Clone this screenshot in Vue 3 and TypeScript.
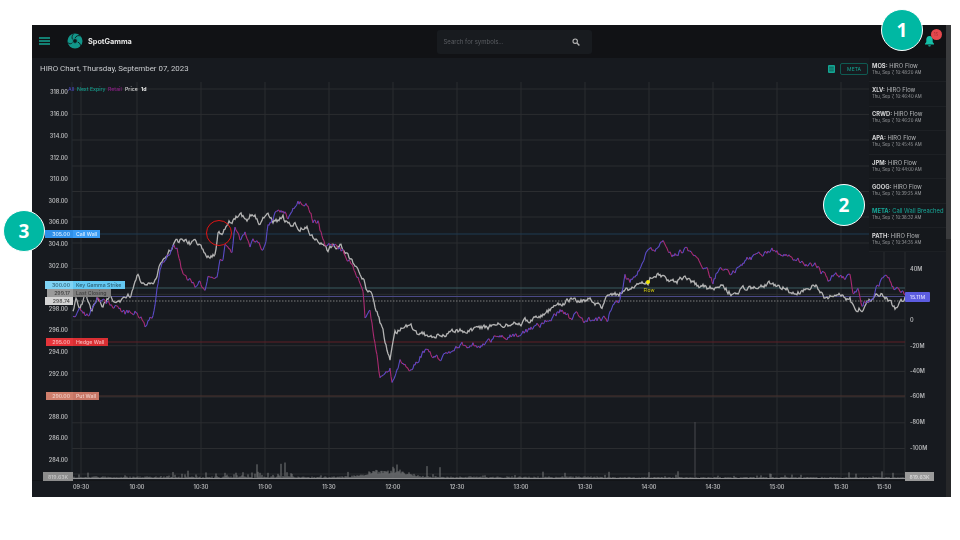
<script setup lang="ts">
type P = [number, number]

const priceKeys: P[] = [[73,310],[76,299],[80,311],[83,303],[86,294],[92,312],[97,298],[103,306],[110,297],[118,303],[125,300],[130,296],[137,273],[143,283],[147,287],[153,285],[158,272],[163,258],[172,248],[182,238],[190,243],[200,243],[207,257],[215,253],[218,233],[222,235],[228,223],[240,215],[247,222],[252,213],[260,223],[267,213],[273,222],[283,218],[288,225],[295,223],[300,228],[307,228],[315,238],[327,249],[340,245],[350,260],[360,273],[367,290],[372,295],[375,307],[382,327],[388,353],[390,360],[395,332],[400,330],[410,325],[420,335],[440,335],[460,330],[480,328],[500,325],[520,323],[540,318],[560,303],[573,300],[590,300],[602,306],[608,297],[627,291],[638,283],[648,282],[655,273],[660,273],[670,282],[687,279],[695,285],[710,288],[723,288],[733,295],[743,287],[760,288],[770,284],[797,293],[817,285],[827,300],[837,295],[850,300],[855,308],[862,308],[873,297],[883,295],[895,309],[905,297]]

const hiroKeys: P[] = [[73,318],[80,309],[88,317],[97,299],[113,305],[125,315],[137,310],[145,325],[153,317],[160,270],[170,250],[177,247],[183,277],[197,287],[200,283],[205,290],[208,278],[217,278],[220,257],[223,262],[225,245],[232,252],[235,227],[240,238],[245,233],[250,247],[253,237],[262,250],[265,247],[268,227],[277,210],[283,210],[288,218],[295,208],[298,202],[308,207],[313,220],[318,222],[325,247],[340,248],[350,260],[357,277],[363,287],[365,317],[370,307],[373,330],[380,377],[390,367],[392,380],[400,362],[410,370],[425,350],[440,360],[460,345],[480,345],[500,335],[520,335],[540,325],[562,310],[570,318],[578,313],[582,320],[607,320],[612,308],[620,300],[625,277],[630,282],[640,267],[648,250],[653,252],[662,241],[672,255],[685,250],[695,258],[707,270],[713,283],[720,265],[730,273],[738,268],[747,258],[760,257],[775,250],[795,260],[815,265],[828,280],[835,275],[850,278],[853,293],[858,292],[862,303],[873,297],[877,283],[888,278],[893,287],[905,295]]

let seed = 20230907
function rnd(): number {
  seed = (seed * 1664525 + 1013904223) % 4294967296
  return seed / 4294967296
}

function sample(keys: P[], amp: number): P[] {
  const out: P[] = []
  let offset = 0
  for (let i = 0; i < keys.length - 1; i++) {
    const [x0, y0] = keys[i]
    const [x1, y1] = keys[i + 1]
    const n = Math.max(1, Math.round(x1 - x0))
    for (let k = 0; k < n; k++) {
      const t = k / n
      offset = offset * 0.6 + (rnd() - 0.5) * amp
      out.push([x0 + (x1 - x0) * t, y0 + (y1 - y0) * t + offset])
    }
  }
  out.push(keys[keys.length - 1])
  return out
}

function toPath(pts: P[]): string {
  return pts.map((p, i) => `${i ? 'L' : 'M'}${p[0].toFixed(1)} ${p[1].toFixed(1)}`).join('')
}

const pricePath = toPath(sample(priceKeys, 4.6))
const hiroPts = sample(hiroKeys, 5)
let upPath = ''
let downPath = ''
for (let i = 1; i < hiroPts.length; i++) {
  const a = hiroPts[i - 1]
  const b = hiroPts[i]
  const seg = `M${a[0].toFixed(1)} ${a[1].toFixed(1)}L${b[0].toFixed(1)} ${b[1].toFixed(1)}`
  if (b[1] < a[1]) upPath += seg
  else downPath += seg
}

function barHeight(x: number): number {
  let h = 1 + rnd() * 1.6
  if (x > 600) h *= 0.8
  const g = Math.exp(-Math.pow((x - 388) / 24, 2))
  h += 10 * g * (0.4 + rnd() * 0.6)
  if (x > 160 && x < 300 && rnd() > 0.7) h += rnd() * 5
  if (rnd() > 0.94) h += rnd() * (x > 150 && x < 460 ? 16 : 6)
  return h
}
let volD = ''
for (let x = 73; x < 905; x += 1) {
  volD += `M${x} 479V${(479 - barHeight(x)).toFixed(1)}`
}

const leftTicks = [
  ['318.00', 92], ['316.00', 114], ['314.00', 136], ['312.00', 158], ['310.00', 179],
  ['308.00', 201], ['306.00', 222], ['304.00', 244], ['302.00', 266], ['298.00', 309],
  ['296.00', 330], ['294.00', 352], ['292.00', 374], ['288.00', 417], ['286.00', 438], ['284.00', 460],
] as const

const rightTicks = [
  ['40M', 269], ['0', 320], ['-20M', 346], ['-40M', 371], ['-60M', 396], ['-80M', 422], ['-100M', 448],
] as const

const timeTicks = [
  ['09:30', 81], ['10:00', 137], ['10:30', 201], ['11:00', 265], ['11:30', 329], ['12:00', 393], ['12:30', 457],
  ['13:00', 521], ['13:30', 585], ['14:00', 649], ['14:30', 713], ['15:00', 777], ['15:30', 841], ['15:50', 884],
] as const

const hGrid = [89, 114.4, 140, 166, 191.5, 217, 243, 268.6, 294.3, 320, 345.7, 371.4, 397, 422.8, 448.5, 474]

const levels = [
  { y: 234, lineY: 234, price: '305.00', name: 'Call Wall', x: 45, w: 55, fill: '#2f8fe8', tag: '#3a9cf5', text: '#d8ecff', line: '#1f3a52' },
  { y: 285, lineY: 288, price: '300.00', name: 'Key Gamma Strike', x: 45, w: 80, fill: '#7fd3f5', tag: '#63c8f2', text: '#2c5f74', line: '#3b5a60' },
  { y: 293, lineY: 296.5, price: '299.17', name: 'Last Closing', x: 47, w: 64, fill: '#9a9a9a', tag: '#7d7d7d', text: '#3e3e3e', line: '#5b5b7c' },
  { y: 342, lineY: 342, price: '295.00', name: 'Hedge Wall', x: 46, w: 62, fill: '#e5343a', tag: '#d92f33', text: '#f5b8b8', line: '#5e1f26' },
  { y: 396, lineY: 396, price: '290.00', name: 'Put Wall', x: 46, w: 53, fill: '#cf7f6d', tag: '#c77666', text: '#eeccc4', line: '#4a332f' },
]

const notes = [
  { sym: 'MOS', msg: 'HIRO Flow', time: 'Thu, Sep 7, 10:48:20 AM' },
  { sym: 'XLV', msg: 'HIRO Flow', time: 'Thu, Sep 7, 10:46:40 AM' },
  { sym: 'CRWD', msg: 'HIRO Flow', time: 'Thu, Sep 7, 10:46:20 AM' },
  { sym: 'APA', msg: 'HIRO Flow', time: 'Thu, Sep 7, 10:45:45 AM' },
  { sym: 'JPM', msg: 'HIRO Flow', time: 'Thu, Sep 7, 10:44:00 AM' },
  { sym: 'GOOG', msg: 'HIRO Flow', time: 'Thu, Sep 7, 10:39:25 AM' },
  { sym: 'META', msg: 'Call Wall Breached', time: 'Thu, Sep 7, 10:38:32 AM', hot: true },
  { sym: 'PATH', msg: 'HIRO Flow', time: 'Thu, Sep 7, 10:34:35 AM' },
]
</script>

<template>
  <div class="page">
    <div class="app">
      <div class="main">
        <header class="topbar">
          <div class="brand">
            <svg class="menu" width="11" height="8" viewBox="0 0 11 8">
              <path d="M0 1h11M0 4h11M0 7h11" stroke="#14a593" stroke-width="1.3" />
            </svg>
            <svg class="logo" width="16" height="16" viewBox="0 0 16 16" fill="none">
              <circle cx="8" cy="8" r="7.5" fill="#12968a" />
              <path d="M8 5.200C9 2.800 11.500 2 13.600 3M10.600 9C13 9.800 14 12 13.300 13.900M5.600 9.600C3.800 11.300 2.500 11 1 9.800M5.500 6.500C4.600 4.600 5 2.500 6.400 1" stroke="#0d1a1c" stroke-width=".9" />
              <circle cx="8" cy="8" r="2.400" fill="#0d1a1c" stroke="#12968a" stroke-width=".8" />
            </svg>
            <span class="brand-name">SpotGamma</span>
          </div>
          <div class="search">
            <span>Search for symbols...</span>
            <svg width="8" height="8" viewBox="0 0 8 8" fill="none" stroke="#b5b5b5">
              <circle cx="3.200" cy="3.200" r="2.200" stroke-width="1.100" />
              <path d="M5 5l2.400 2.400" stroke-width="1.400" />
            </svg>
          </div>
          <div class="bell-wrap">
            <svg width="11" height="12" viewBox="0 0 11 12" fill="#14c0a8">
              <path d="M5.500 1c-2 0-3.200 1.500-3.200 3.600V7L1 8.800v.7h9v-.7L8.700 7V4.600C8.700 2.500 7.500 1 5.500 1Z" />
              <path d="M4.200 10.200h2.600a1.300 1.300 0 0 1-2.600 0Z" />
            </svg>
            <span class="badge">15</span>
          </div>
        </header>

        <section class="card">
          <div class="card-head">
            <h1>HIRO Chart, Thursday, September 07, 2023</h1>
            <div class="tools">
              <svg width="7" height="8" viewBox="0 0 7 8">
                <rect width="7" height="8" rx="1" fill="#14a593" />
                <path d="M1.200 2.200h4.600M1.200 4h4.600M1.200 5.800h4.600" stroke="#0c3f3a" stroke-width=".7" />
              </svg>
              <span class="symbol">META</span>
            </div>
          </div>

          <svg class="chart" viewBox="32 82 914 415" width="914" height="415">
            <g stroke="#2b2d30" stroke-width="1">
              <path v-for="y in hGrid" :key="y" :d="`M72 ${y}H905`" />
              <path v-for="t in timeTicks" :key="t[0]" :d="`M${t[1]} 82V479`" />
            </g>
            <path d="M72 82V479" stroke="#252a33" />
            <path d="M905 82V479" stroke="#2b2d30" />

            <path v-for="l in levels" :key="l.y" :d="`M${l.x + l.w} ${l.lineY}H905`" :stroke="l.line" stroke-width="1" />
            <path d="M72 296.500H905" stroke="#4b4a86" />
            <path d="M72 301H905" stroke="#7d7d7d" stroke-dasharray="1.500 1.500" />

            <path :d="volD" stroke="#77787a" stroke-width="1" />
            <path d="M695 479V422" stroke="#55565a" stroke-width=".8" />
            <path d="M73 478.500H905" stroke="#8e8f91" />
            <path d="M32 480.500H905" stroke="#121417" stroke-width="1" />
            <path :d="pricePath" fill="none" stroke="#b4b4b4" stroke-width="1.300" />
            <path :d="downPath" fill="none" stroke="#a92a70" stroke-width="1.100" />
            <path :d="upPath" fill="none" stroke="#5a4bc6" stroke-width="1.100" />

            <circle cx="648" cy="282" r="2" fill="#f2e600" />
            <text x="649" y="291.500" class="flow" text-anchor="middle">Flow</text>
            <circle cx="219" cy="233" r="12.500" fill="none" stroke="#e01414" stroke-width="1" />

            <g class="axis">
              <text v-for="t in leftTicks" :key="t[0]" x="68" :y="t[1] + 2" text-anchor="end">{{ t[0] }}</text>
              <text v-for="t in rightTicks" :key="t[0]" x="910" :y="t[1] + 2">{{ t[0] }}</text>
              <text v-for="t in timeTicks" :key="t[0]" :x="t[1]" y="489" text-anchor="middle">{{ t[0] }}</text>
            </g>

            <text x="68" y="91" class="legend" fill="#4a48b8">All</text>
            <text x="77" y="91" class="legend" fill="#159c8c">Next Expiry</text>
            <text x="108" y="91" class="legend" fill="#8c1e86">Retail</text>
            <text x="125" y="91" class="legend" fill="#cfcfcf">Price</text>
            <text x="141" y="91" class="legend strong" fill="#eee">1d</text>

            <g v-for="l in levels" :key="l.name">
              <rect :x="l.x" :y="l.y - 4" :width="73 - l.x" height="8" :fill="l.fill" />
              <rect x="73" :y="l.y - 4" :width="l.x + l.w - 73" height="8" :fill="l.tag" />
              <text x="70" :y="l.y + 2" text-anchor="end" class="tag" :fill="l.text">{{ l.price }}</text>
              <text x="76" :y="l.y + 2" class="tag" :fill="l.text">{{ l.name }}</text>
            </g>
            <rect x="45" y="297" width="28" height="8" fill="#d4d4d4" />
            <text x="70" y="303" text-anchor="end" class="tag" fill="#4a4a4a">298.74</text>

            <rect x="905" y="292" width="25" height="10" rx="1" fill="#5c5ce0" />
            <text x="917.500" y="299" text-anchor="middle" class="tag" fill="#dcdcff">15.11M</text>
            <rect x="43" y="472" width="30" height="9" fill="#8d8d8d" />
            <text x="58" y="478.500" text-anchor="middle" class="tag" fill="#c8c8c8">819.63K</text>
            <rect x="905" y="472" width="29" height="9" fill="#9a9a9a" />
            <text x="919.500" y="478.500" text-anchor="middle" class="tag" fill="#dadada">819.63K</text>
          </svg>

          <ul class="notes">
            <li v-for="n in notes" :key="n.sym" :class="{ hot: n.hot }">
              <p class="note-title"><b>{{ n.sym }}:</b> {{ n.msg }}</p>
              <p class="note-time">{{ n.time }}</p>
            </li>
          </ul>
        </section>
      </div>
      <div class="scrollbar"><div class="thumb"></div></div>
      <span class="step step-1">1</span>
      <span class="step step-2">2</span>
      <span class="step step-3">3</span>
    </div>
  </div>
</template>

<style>
html, body { margin: 0; background: #fff; }
</style>

<style scoped>
.page {
  box-sizing: border-box;
  width: 960px;
  height: 540px;
  padding: 25px 9px 43px 32px;
  background: #fff;
  font-family: Inter, "Liberation Sans", sans-serif;
}
.app {
  position: relative;
  display: flex;
  height: 472px;
  background: #15171b;
}
.main {
  flex: 1;
  min-width: 0;
  display: flex;
  flex-direction: column;
  filter: blur(0.5px);
}
.topbar {
  height: 33px;
  box-sizing: border-box;
  background: #111215;
  display: flex;
  align-items: center;
  position: relative;
  justify-content: center;
}
.brand {
  position: absolute;
  left: 7px;
  top: 8px;
  display: flex;
  align-items: center;
}
.logo { margin-left: 17px; }
.brand-name {
  margin-left: 5px;
  color: #e4e4e4;
  font-size: 7.300px;
  font-weight: 700;
}
.search {
  width: 155px;
  height: 24px;
  box-sizing: border-box;
  padding: 0 12px 0 7px;
  margin-left: 50px;
  background: #181b1f;
  border-radius: 3px;
  display: flex;
  align-items: center;
  justify-content: space-between;
  color: #5b5e63;
  font-size: 6px;
}
.bell-wrap {
  position: absolute;
  right: 6px;
  top: 10px;
  width: 16px;
  height: 12px;
}
.bell-wrap svg { display: block; }
.badge {
  position: absolute;
  right: -1.500px;
  top: -6.500px;
  width: 11px;
  height: 11px;
  border-radius: 50%;
  background: #e5484d;
  color: #a83236;
  font-size: 4.500px;
  line-height: 11px;
  text-align: center;
}
.card {
  position: relative;
  flex: 1;
  background: #171a1f;
  display: flex;
  flex-direction: column;
  min-height: 0;
}
.card-head {
  height: 24px;
  display: flex;
  align-items: center;
  justify-content: space-between;
  padding: 0 78px 3px 8px;
  box-sizing: border-box;
}
h1 {
  margin: 0;
  color: #c9cbce;
  font-family: Roboto, sans-serif;
  font-size: 7.900px;
  font-weight: 400;
}
.tools {
  display: flex;
  align-items: center;
  gap: 5px;
}
.symbol {
  width: 28px;
  height: 12px;
  box-sizing: border-box;
  border: 1px solid #0f5a52;
  border-radius: 2px;
  color: #14a593;
  font-size: 5px;
  line-height: 10px;
  text-align: center;
}
.chart {
  display: block;
  flex: none;
}
.axis text {
  fill: #b6b7b9;
  font-size: 5.500px;
  font-weight: 600;
}
.legend { font-size: 5.200px; font-weight: 500; }
.strong { font-weight: 700; }
.tag { font-size: 5.200px; font-weight: 500; }
.flow { fill: #d8cf10; font-size: 5px; }
.notes {
  position: absolute;
  top: 0;
  right: 0;
  width: 77px;
  margin: 0;
  padding: 0;
  list-style: none;
  background: #15181c;
}
.notes li {
  height: 24.300px;
  box-sizing: border-box;
  padding: 3.500px 0 0 3px;
  border-bottom: 1px solid #1d2024;
}
.notes p { margin: 0; white-space: nowrap; }
.note-title {
  color: #b4b6b8;
  font-size: 5.800px;
  line-height: 8px;
}
.note-title b { color: #d6d7d8; font-weight: 700; }
.note-time {
  color: #9a9c9f;
  font-size: 4.300px;
  line-height: 6.500px;
}
.hot .note-title, .hot .note-title b { color: #17a697; }
.scrollbar {
  width: 5px;
  background: #262729;
}
.thumb {
  height: 214px;
  background: #3a3b3d;
}
.step {
  position: absolute;
  width: 42px;
  height: 42px;
  box-sizing: border-box;
  border: 1px solid #fff;
  border-radius: 50%;
  background: #00b8a3;
  color: #fff;
  font-family: "Open Sans", sans-serif;
  font-size: 19px;
  font-weight: 700;
  line-height: 40px;
  text-align: center;
}
.step-1 { left: 849px; top: -16px; }
.step-2 { left: 791px; top: 159px; }
.step-3 { left: -29px; top: 185px; }
</style>
